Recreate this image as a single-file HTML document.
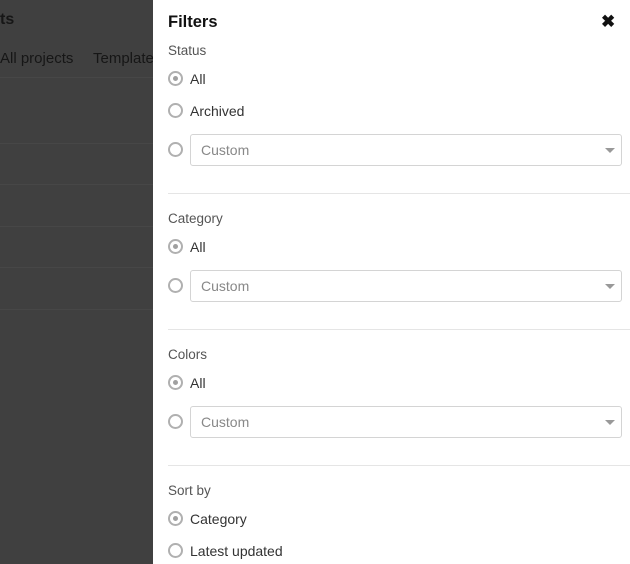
<!DOCTYPE html>
<html><head><style>
body{margin:0;width:630px;height:564px;overflow:hidden;background:#404040;font-family:"Liberation Sans",sans-serif;position:relative}
.a{position:absolute;white-space:nowrap}
.bg{color:#161616;font-size:15px}
.ln{position:absolute;left:0;width:153px;height:1px;background:#474747}
.p{position:absolute;left:153px;top:0;width:477px;height:564px;background:#fff}
.lab{position:absolute;left:15px;font-size:13.5px;color:#555}
.r{position:absolute;left:15px;width:11px;height:11px;border:2px solid #b0b0b0;border-radius:50%}
.r.on::after{content:"";position:absolute;left:3px;top:3px;width:5px;height:5px;border-radius:50%;background:#a0a0a0}
.t{position:absolute;left:37px;font-size:14px;color:#333}
.s{position:absolute;left:37px;width:430px;height:30px;border:1px solid #d4d4d4;border-radius:3px}
.s span{position:absolute;left:10px;top:7px;font-size:14px;color:#888}
.s i{position:absolute;right:6px;top:13px;border-left:5px solid transparent;border-right:5px solid transparent;border-top:5px solid #999}
.d{position:absolute;left:15px;right:0;height:1px;background:#e5e5e5}
</style></head><body>
<div class="a bg" style="left:0;top:11px;font-weight:bold;font-size:16px">ts</div>
<div class="a bg" style="left:0;top:50px">All projects</div>
<div class="a bg" style="left:93px;top:50px">Templates</div>
<div class="ln" style="top:77px"></div><div class="ln" style="top:143px"></div><div class="ln" style="top:184px"></div><div class="ln" style="top:226px"></div><div class="ln" style="top:267px"></div><div class="ln" style="top:309px"></div>
<div class="p">
<div class="a" style="left:15px;top:13px;font-size:16.5px;font-weight:bold;color:#111">Filters</div>
<div class="a" style="left:448px;top:12px;font-size:17px;font-weight:bold;color:#111">✖</div>
<div class="lab" style="top:43px">Status</div>
<div class="r on" style="top:71px"></div><div class="t" style="top:71px">All</div>
<div class="r" style="top:103px"></div><div class="t" style="top:103px">Archived</div>
<div class="r" style="top:142px"></div><div class="s" style="top:134px"><span>Custom</span><i></i></div>
<div class="d" style="top:193px"></div>
<div class="lab" style="top:211px">Category</div>
<div class="r on" style="top:239px"></div><div class="t" style="top:239px">All</div>
<div class="r" style="top:278px"></div><div class="s" style="top:270px"><span>Custom</span><i></i></div>
<div class="d" style="top:329px"></div>
<div class="lab" style="top:347px">Colors</div>
<div class="r on" style="top:375px"></div><div class="t" style="top:375px">All</div>
<div class="r" style="top:414px"></div><div class="s" style="top:406px"><span>Custom</span><i></i></div>
<div class="d" style="top:465px"></div>
<div class="lab" style="top:483px">Sort by</div>
<div class="r on" style="top:511px"></div><div class="t" style="top:511px">Category</div>
<div class="r" style="top:543px"></div><div class="t" style="top:543px">Latest updated</div>
</div>
</body></html>
